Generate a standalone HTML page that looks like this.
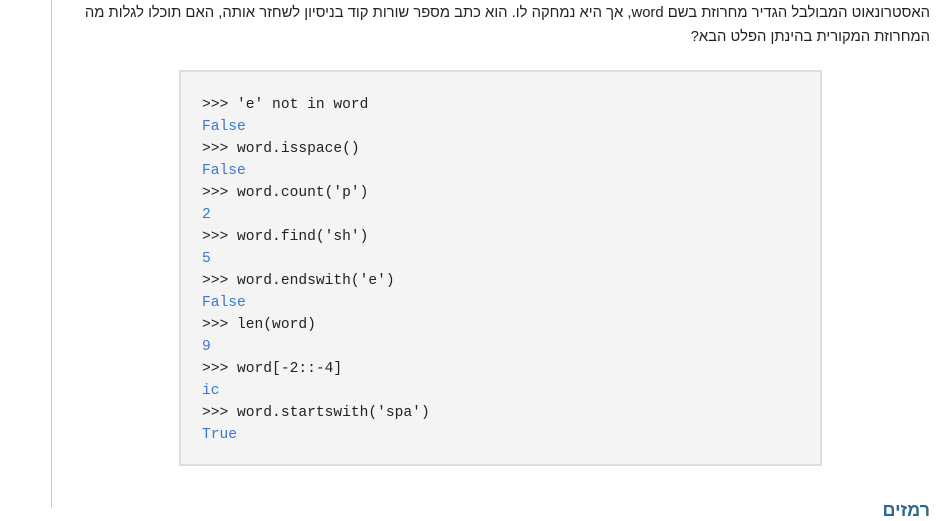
<!DOCTYPE html>
<html><head><meta charset="utf-8"><style>
body{margin:0;width:940px;height:508px;overflow:hidden;background:#fff;position:relative;font-family:"Liberation Sans","Noto Sans CJK JP",sans-serif}
.vl{position:absolute;left:51px;top:0;width:1px;height:508px;background:#ccc}
.p{position:absolute;left:60px;width:870px;top:1px;direction:rtl;text-align:right;font-size:14.8px;line-height:24px;color:#222;white-space:nowrap;overflow:hidden}
.box{position:absolute;left:179px;top:70px;width:639px;height:392px;border:2px solid #ddd;background:#f4f4f4}
pre{margin:0;position:absolute;left:21px;top:22px;font-family:"Liberation Mono",monospace;font-size:14.6px;line-height:22px;color:#222}
.b{color:#3a78d0}
.h{position:absolute;right:10px;top:500px;font-size:18px;font-weight:bold;color:#2b6a8c;direction:rtl}
</style></head><body>
<div class="vl"></div>
<div class="p"><div>האסטרונאוט המבולבל הגדיר מחרוזת בשם word, אך היא נמחקה לו. הוא כתב מספר שורות קוד בניסיון לשחזר אותה, האם תוכלו לגלות מה</div><div>המחרוזת המקורית בהינתן הפלט הבא?</div></div>
<div class="box"><pre>&gt;&gt;&gt; 'e' not in word
<span class="b">False</span>
&gt;&gt;&gt; word.isspace()
<span class="b">False</span>
&gt;&gt;&gt; word.count('p')
<span class="b">2</span>
&gt;&gt;&gt; word.find('sh')
<span class="b">5</span>
&gt;&gt;&gt; word.endswith('e')
<span class="b">False</span>
&gt;&gt;&gt; len(word)
<span class="b">9</span>
&gt;&gt;&gt; word[-2::-4]
<span class="b">ic</span>
&gt;&gt;&gt; word.startswith('spa')
<span class="b">True</span></pre></div>
<div class="h">רמזים</div>
</body></html>
